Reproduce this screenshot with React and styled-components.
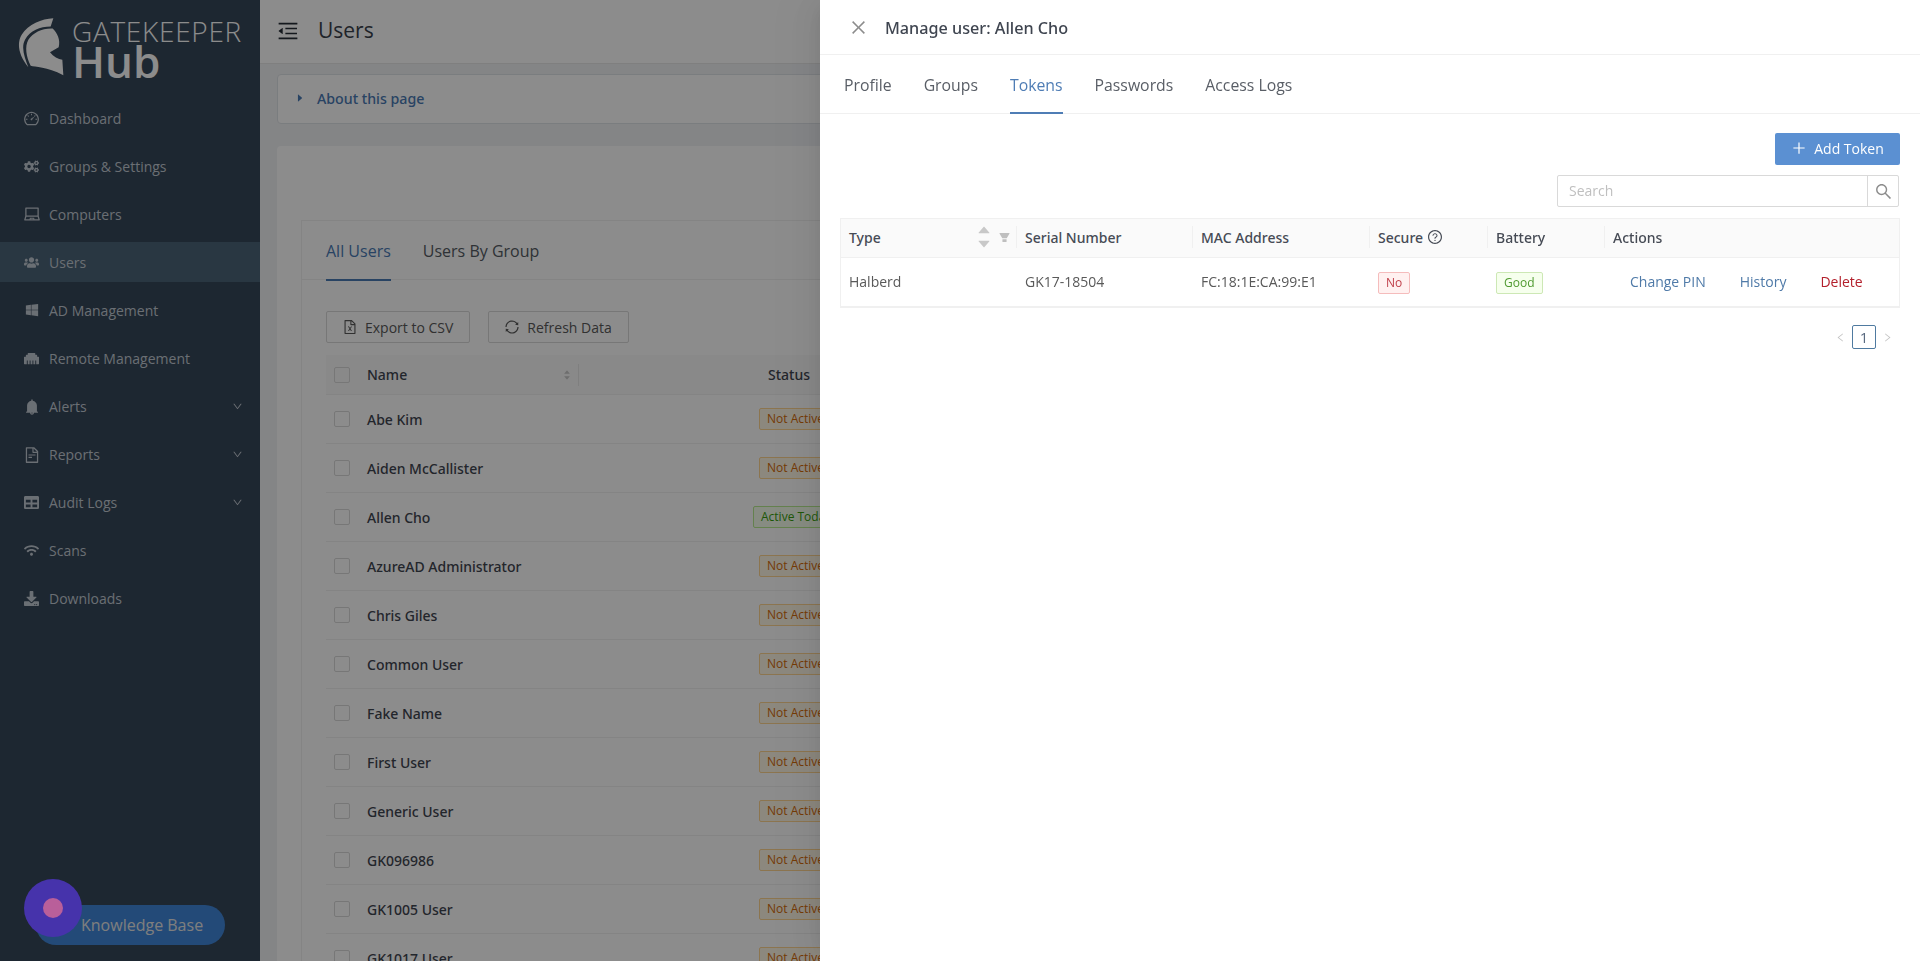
import React from 'react';
import styled, { createGlobalStyle, css } from 'styled-components';
import {
  AiOutlineDashboard, AiOutlineLaptop, AiFillBell, AiOutlineFileText, AiOutlineDown,
  AiOutlineMenuFold, AiFillCaretRight, AiFillCaretUp, AiFillCaretDown, AiFillFilter,
  AiOutlineFileExcel, AiOutlineSync, AiOutlineClose, AiOutlinePlus, AiOutlineSearch,
  AiOutlineQuestionCircle, AiOutlineLeft, AiOutlineRight,
} from 'react-icons/ai';
import { FaCogs, FaUsers, FaWindows, FaTable, FaWifi, FaDownload, FaEthernet } from 'react-icons/fa';

const GlobalStyle = createGlobalStyle`
  html, body { margin: 0; height: 100%; overflow: hidden; }
  body { font-family: "Open Sans", "Noto Sans", sans-serif; font-size: 14px; color: #595959; }
  * { box-sizing: border-box; }
`;

const medium = css`
  font-family: "Noto Sans", "Open Sans", sans-serif;
  font-weight: 500;
`;

const Layout = styled.div`
  display: flex;
  height: 100vh;
  overflow: hidden;
  background: #f0f2f5;
`;

const Sidebar = styled.aside`
  width: 260px;
  flex: none;
  background: #364759;
  display: flex;
  flex-direction: column;
  justify-content: space-between;
  padding-bottom: 16px;
`;

const LogoRow = styled.div`
  display: flex;
  gap: 8px;
  padding: 17px 0 0 18px;
  height: 95px;
  color: #fff;
`;

const LogoText = styled.div`
  display: flex;
  flex-direction: column;
`;

const LogoTop = styled.span`
  font-size: 28px;
  line-height: 28px;
  letter-spacing: 0.7px;
  font-weight: 300;
`;

const LogoHub = styled.span`
  font-size: 44px;
  line-height: 33px;
  font-weight: 600;
`;

const Menu = styled.nav`
  display: flex;
  flex-direction: column;
  gap: 8.1px;
  margin-top: 3px;
`;

const MenuItem = styled.div`
  height: 40px;
  display: flex;
  align-items: center;
  gap: 10px;
  padding: 0 16px 0 24px;
  color: #c2cad3;
  background: ${p => (p.$active ? '#4c6478' : 'transparent')};
`;

const MenuIcon = styled.span`
  width: 15px;
  height: 18px;
  flex: none;
  display: flex;
  align-items: center;
  justify-content: center;
  font-size: ${p => p.$size || 15}px;
  svg { flex: none; }
`;

const MenuLabel = styled.span`
  flex: 1;
`;

const Arrow = styled(AiOutlineDown)`
  font-size: 11px;
  margin-right: 1px;
`;

const KnowledgeWrap = styled.div`
  padding-left: 36px;
`;

const KnowledgeButton = styled.div`
  width: 189px;
  height: 40px;
  border-radius: 20px;
  background: #4087da;
  color: #e6e6e6;
  font-size: 16px;
  display: flex;
  align-items: center;
  padding-left: 45px;
`;

const HelpBubble = styled.div`
  position: fixed;
  left: 24px;
  top: 879px;
  width: 58px;
  height: 58px;
  border-radius: 50%;
  background: #4633ab;
  display: flex;
  align-items: center;
  justify-content: center;
  z-index: 20;

  &::after {
    content: '';
    width: 20px;
    height: 20px;
    border-radius: 50%;
    background: #b95f9a;
  }
`;

const Main = styled.main`
  flex: 1;
  min-width: 0;
  display: flex;
  flex-direction: column;
`;

const TopBar = styled.header`
  height: 64px;
  flex: none;
  background: #fff;
  border-bottom: 1px solid #e8e8e8;
  display: flex;
  align-items: center;
  gap: 18px;
  padding: 0 0 2px 16px;
  color: #262c35;
  svg { font-size: 24px; }
`;

const PageTitle = styled.h1`
  margin: 0;
  font-size: 21px;
  line-height: 1;
  font-weight: 400;
  color: #3a414c;
`;

const Content = styled.div`
  padding: 10px 16px 0 17px;
  display: flex;
  flex-direction: column;
  gap: 22px;
`;

const AboutCard = styled.div`
  height: 50px;
  background: #fff;
  border: 1px solid #dfe3e8;
  border-radius: 4px;
  display: flex;
  align-items: center;
  gap: 12px;
  padding: 0 0 2px 17px;
  color: #4a7ab5;
  font-size: 14.2px;
  ${medium}
  svg { font-size: 10px; }
`;

const PageCard = styled.section`
  background: #fff;
  padding: 74px 24px 0;
  border-radius: 4px;
`;

const InnerPanel = styled.div`
  border: 1px solid #f0f0f0;
  padding: 0 24px;
`;

const LeftTabs = styled.div`
  height: 59px;
  display: flex;
  gap: 32px;
  margin: 0 -24px;
  padding: 0 24px;
  border-bottom: 1px solid #f0f0f0;
`;

const LeftTab = styled.div`
  font-size: 16px;
  display: flex;
  align-items: center;
  height: 60px;
  padding-top: 2px;
  color: ${p => (p.$active ? '#4a7ab5' : '#555b63')};
  border-bottom: 2px solid ${p => (p.$active ? '#4a7ab5' : 'transparent')};
`;

const ActionRow = styled.div`
  display: flex;
  gap: 18px;
  padding: 31px 0 12px;
`;

const OutlineButton = styled.div`
  height: 32px;
  padding: 0 16px 0 15px;
  border: 1px solid #d9d9d9;
  border-radius: 2px;
  display: flex;
  align-items: center;
  gap: 7px;
  color: #595959;
  svg { font-size: 16px; }
`;

const UserHead = styled.div`
  display: grid;
  grid-template-columns: 252px 146px 160px;
  align-items: center;
  height: 40px;
  background: #fafafa;
  border-bottom: 1px solid #f0f0f0;
  color: #3f4550;
  ${medium}
`;

const UserRow = styled.div`
  display: grid;
  grid-template-columns: 252px 146px 160px;
  align-items: center;
  height: 49px;
  border-bottom: 1px solid #f0f0f0;
`;

const NameCell = styled.div`
  display: flex;
  align-items: center;
  gap: 17px;
  padding-left: 8px;
  height: 22px;
  color: #3f4550;
  white-space: nowrap;
  ${medium}
`;

const NameText = styled.span`
  flex: 1;
`;

const Check = styled.span`
  width: 16px;
  height: 16px;
  border: 1px solid #d9d9d9;
  border-radius: 2px;
  flex: none;
`;

const SortStack = styled.span`
  display: inline-flex;
  flex-direction: column;
  color: #c8c8c8;
  margin-right: ${p => p.$gap || 2}px;
  svg { font-size: 8px; margin-top: -1px; margin-bottom: -1px; display: block; }
`;

const HeadDivider = styled.div`
  height: 22px;
  border-left: 1px solid #e8e8e8;
`;

const StatusHead = styled.div`
  white-space: nowrap;
  padding-left: 44px;
`;

const StatusCell = styled.div`
  display: flex;
  padding-left: ${p => (p.$wide ? '29px' : '35px')};
`;

const StatusBlank = styled.div``;

const Tag = styled.span`
  display: inline-block;
  height: 22px;
  line-height: 20px;
  padding: 0 7px;
  border-radius: 2px;
  font-size: 12px;
  font-family: "Open Sans", sans-serif;
  font-weight: 400;
  white-space: nowrap;
  border: 1px solid ${p => p.$border};
  background: ${p => p.$bg};
  color: ${p => p.$color};
`;

const Mask = styled.div`
  position: fixed;
  inset: 0;
  background: rgba(0, 0, 0, 0.45);
  z-index: 10;
`;

const Drawer = styled.aside`
  position: fixed;
  top: 0;
  right: 0;
  bottom: 0;
  width: 1100px;
  background: #fff;
  z-index: 30;
  box-shadow: -6px 0 16px -8px rgba(0,0,0,.08), -9px 0 28px 0 rgba(0,0,0,.05), -12px 0 48px 16px rgba(0,0,0,.03);
  display: flex;
  flex-direction: column;
`;

const DrawerHead = styled.div`
  height: 55px;
  flex: none;
  border-bottom: 1px solid #f0f0f0;
  display: flex;
  align-items: center;
  gap: 17px;
  padding: 1px 0 0 29px;
  svg { font-size: 19px; color: #8c8c8c; }
`;

const DrawerTitle = styled.div`
  font-size: 16.2px;
  color: #3f4550;
  ${medium}
`;

const DrawerTabs = styled.div`
  height: 59px;
  flex: none;
  display: flex;
  gap: 32px;
  padding-left: 24px;
  border-bottom: 1px solid #f0f0f0;
`;

const DrawerTab = styled.div`
  font-size: 15.8px;
  height: 59px;
  padding-top: 2px;
  display: flex;
  align-items: center;
  color: ${p => (p.$active ? '#4f7db5' : '#595e66')};
  border-bottom: 2px solid ${p => (p.$active ? '#4f7db5' : 'transparent')};
`;

const DrawerBody = styled.div`
  padding: 19px 20px 0;
  display: flex;
  flex-direction: column;
  align-items: flex-end;
`;

const AddButton = styled.div`
  width: 125px;
  height: 32px;
  padding-bottom: 2px;
  background: #5b90d2;
  border-radius: 2px;
  color: #fff;
  display: flex;
  align-items: center;
  justify-content: center;
  gap: 7px;
  svg { font-size: 16px; }
`;

const SearchBox = styled.div`
  display: flex;
  width: 342px;
  height: 32px;
  margin-top: 10px;
  margin-right: 1px;
  border: 1px solid #d9d9d9;
  border-radius: 2px;
`;

const SearchInput = styled.div`
  flex: 1;
  padding-left: 11px;
  line-height: 30px;
  color: #bfbfbf;
`;

const SearchBtn = styled.div`
  width: 31px;
  border-left: 1px solid #d9d9d9;
  display: flex;
  align-items: center;
  justify-content: center;
  color: #8c8c8c;
  svg { font-size: 19px; }
`;

const TokenTable = styled.div`
  width: 100%;
  margin-top: 11px;
  border: 1px solid #f0f0f0;
  border-bottom-width: 2px;
`;

const TokenHead = styled.div`
  display: grid;
  grid-template-columns: 176px 176px 177px 118px 117px 1fr;
  align-items: center;
  height: 39px;
  padding-bottom: 2px;
  background: #fafafa;
  border-bottom: 1px solid #f0f0f0;
  color: #464b55;
  ${medium}
`;

const TokenHeadCell = styled.div`
  height: 22px;
  display: flex;
  align-items: center;
  gap: 4px;
  padding: 0 ${p => (p.$tight ? 5 : 8)}px 0 8px;
  border-right: 1px solid ${p => (p.$last ? 'transparent' : '#f0f0f0')};
  svg { font-size: 16px; }
`;

const HeadLabel = styled.span`
  flex: ${p => (p.$grow ? 1 : 'none')};
`;

const FilterIcon = styled(AiFillFilter)`
  color: #bfbfbf;
  && { font-size: 13px; }
`;

const TokenRow = styled.div`
  display: grid;
  grid-template-columns: 176px 176px 177px 118px 117px 1fr;
  align-items: center;
  height: 48px;
  padding-bottom: 1px;
`;

const TokenCell = styled.div`
  padding: 0 8px;
`;

const TagCell = styled(TokenCell)`
  padding-top: 3px;
`;

const ActionsCell = styled.div`
  display: flex;
  gap: 34px;
  padding-left: 25px;
`;

const ActionLink = styled.span`
  color: ${p => (p.$danger ? '#b3202c' : '#4f7aa8')};
`;

const Pager = styled.div`
  display: flex;
  align-items: center;
  gap: 6px;
  margin: 17px 7px 0 0;
  color: #c4c4c4;
  svg { font-size: 11px; }
`;

const PageNum = styled.span`
  width: 24px;
  height: 24px;
  border: 1px solid #4f7aa0;
  border-radius: 2px;
  color: #5a6a80;
  font-size: 15px;
  text-align: center;
  line-height: 22px;
`;

const navItems = [
  { label: 'Dashboard', icon: <AiOutlineDashboard />, size: 17 },
  { label: 'Groups & Settings', icon: <FaCogs />, size: 15 },
  { label: 'Computers', icon: <AiOutlineLaptop />, size: 18 },
  { label: 'Users', icon: <FaUsers />, size: 15 },
  { label: 'AD Management', icon: <FaWindows />, size: 14 },
  { label: 'Remote Management', icon: <FaEthernet />, size: 15 },
  { label: 'Alerts', icon: <AiFillBell />, size: 18, sub: true },
  { label: 'Reports', icon: <AiOutlineFileText />, size: 18, sub: true },
  { label: 'Audit Logs', icon: <FaTable />, size: 15, sub: true },
  { label: 'Scans', icon: <FaWifi />, size: 15 },
  { label: 'Downloads', icon: <FaDownload />, size: 15 },
];

const users = [
  'Abe Kim', 'Aiden McCallister', 'Allen Cho', 'AzureAD Administrator', 'Chris Giles', 'Common User',
  'Fake Name', 'First User', 'Generic User', 'GK096986', 'GK1005 User', 'GK1017 User',
];

// traced from the logo: crest crescent plus the helmet body with the eye notch cut in
const Helmet = () => (
  <svg width="46" height="59" viewBox="24 22 138 176" fill="#fff" style={{ flex: 'none' }}>
    <path d="M130 25C95 27 55 42 35 75C20 100 25 135 55 172C45 145 32 115 45 90C60 62 90 50 122 50Z" />
    <path d="M128 56C95 55 70 68 55 90C44 110 48 140 62 168C75 172 110 170 160 196L157 150C145 148 130 140 120 127L146 112C152 90 142 70 128 56Z" />
  </svg>
);

const App = () => (
  <>
    <GlobalStyle />
    <Layout>
      <Sidebar>
        <div>
          <LogoRow>
            <Helmet />
            <LogoText>
              <LogoTop>GATEKEEPER</LogoTop>
              <LogoHub>Hub</LogoHub>
            </LogoText>
          </LogoRow>
          <Menu>
            {navItems.map(item => (
              <MenuItem key={item.label} $active={item.label === 'Users'}>
                <MenuIcon $size={item.size}>{item.icon}</MenuIcon>
                <MenuLabel>{item.label}</MenuLabel>
                {item.sub && <Arrow />}
              </MenuItem>
            ))}
          </Menu>
        </div>
        <KnowledgeWrap>
          <KnowledgeButton>Knowledge Base</KnowledgeButton>
        </KnowledgeWrap>
      </Sidebar>
      <Main>
        <TopBar>
          <AiOutlineMenuFold />
          <PageTitle>Users</PageTitle>
        </TopBar>
        <Content>
          <AboutCard>
            <AiFillCaretRight />
            About this page
          </AboutCard>
          <PageCard>
            <InnerPanel>
              <LeftTabs>
                <LeftTab $active>All Users</LeftTab>
                <LeftTab>Users By Group</LeftTab>
              </LeftTabs>
              <ActionRow>
                <OutlineButton><AiOutlineFileExcel />Export to CSV</OutlineButton>
                <OutlineButton><AiOutlineSync />Refresh Data</OutlineButton>
              </ActionRow>
              <UserHead>
                <NameCell>
                  <Check />
                  <NameText>Name</NameText>
                  <SortStack $gap={7}><AiFillCaretUp /><AiFillCaretDown /></SortStack>
                </NameCell>
                <HeadDivider />
                <StatusHead>Status</StatusHead>
              </UserHead>
              {users.map(name => (
                <UserRow key={name}>
                  <NameCell>
                    <Check />
                    <NameText>{name}</NameText>
                  </NameCell>
                  <StatusBlank />
                  {name === 'Allen Cho' ? (
                    <StatusCell $wide>
                      <Tag $border="#b7eb8f" $bg="#f6ffed" $color="#389e0d">Active Today</Tag>
                    </StatusCell>
                  ) : (
                    <StatusCell>
                      <Tag $border="#ffd591" $bg="#fff7e6" $color="#d46b08">Not Active</Tag>
                    </StatusCell>
                  )}
                </UserRow>
              ))}
            </InnerPanel>
          </PageCard>
        </Content>
      </Main>
    </Layout>
    <Mask />
    <HelpBubble />
    <Drawer>
      <DrawerHead>
        <AiOutlineClose />
        <DrawerTitle>Manage user: Allen Cho</DrawerTitle>
      </DrawerHead>
      <DrawerTabs>
        <DrawerTab>Profile</DrawerTab>
        <DrawerTab>Groups</DrawerTab>
        <DrawerTab $active>Tokens</DrawerTab>
        <DrawerTab>Passwords</DrawerTab>
        <DrawerTab>Access Logs</DrawerTab>
      </DrawerTabs>
      <DrawerBody>
        <AddButton><AiOutlinePlus />Add Token</AddButton>
        <SearchBox>
          <SearchInput>Search</SearchInput>
          <SearchBtn><AiOutlineSearch /></SearchBtn>
        </SearchBox>
        <TokenTable>
          <TokenHead>
            <TokenHeadCell $tight>
              <HeadLabel $grow>Type</HeadLabel>
              <SortStack><AiFillCaretUp /><AiFillCaretDown /></SortStack>
              <FilterIcon />
            </TokenHeadCell>
            <TokenHeadCell>Serial Number</TokenHeadCell>
            <TokenHeadCell>MAC Address</TokenHeadCell>
            <TokenHeadCell>Secure<AiOutlineQuestionCircle /></TokenHeadCell>
            <TokenHeadCell>Battery</TokenHeadCell>
            <TokenHeadCell $last>Actions</TokenHeadCell>
          </TokenHead>
          <TokenRow>
            <TokenCell>Halberd</TokenCell>
            <TokenCell>GK17-18504</TokenCell>
            <TokenCell>FC:18:1E:CA:99:E1</TokenCell>
            <TagCell><Tag $border="#f5bcbc" $bg="#fff1f0" $color="#c0404a">No</Tag></TagCell>
            <TagCell><Tag $border="#cde8b5" $bg="#f6ffed" $color="#4f9a2f">Good</Tag></TagCell>
            <ActionsCell>
              <ActionLink>Change PIN</ActionLink>
              <ActionLink>History</ActionLink>
              <ActionLink $danger>Delete</ActionLink>
            </ActionsCell>
          </TokenRow>
        </TokenTable>
        <Pager>
          <AiOutlineLeft />
          <PageNum>1</PageNum>
          <AiOutlineRight />
        </Pager>
      </DrawerBody>
    </Drawer>
  </>
);

export default App;
